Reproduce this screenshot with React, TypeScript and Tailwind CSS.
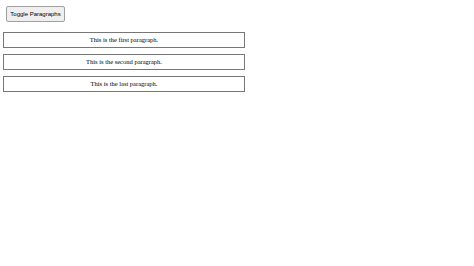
import React, { useState } from 'react';

const paragraphs = [
  'This is the first paragraph.',
  'This is the second paragraph.',
  'This is the last paragraph.',
];

const App: React.FC = () => {
  const [shown, setShown] = useState(true);

  return (
    <div className="w-[474px] h-[266px] bg-white">
      <div className="flex pt-[6px] pl-[6px]">
        <button
          onClick={() => setShown(!shown)}
          className="h-[16px] w-[59px] px-0 whitespace-nowrap bg-[#efefef] border border-[#a0a0a0] rounded-[2px] text-[6px] leading-none text-black font-['Liberation_Sans',Arial,sans-serif]"
        >
          Toggle Paragraphs
        </button>
      </div>

      {shown && (
        <div className="mt-[10px] ml-[3px] w-[242px] flex flex-col gap-[6px]">
          {paragraphs.map((text) => (
            <p
              key={text}
              className="h-[16px] border border-[#777] flex items-center justify-center whitespace-nowrap text-[6.5px] text-black font-['Liberation_Serif','Times_New_Roman',serif]"
            >
              {text}
            </p>
          ))}
        </div>
      )}
    </div>
  );
};

export default App;
